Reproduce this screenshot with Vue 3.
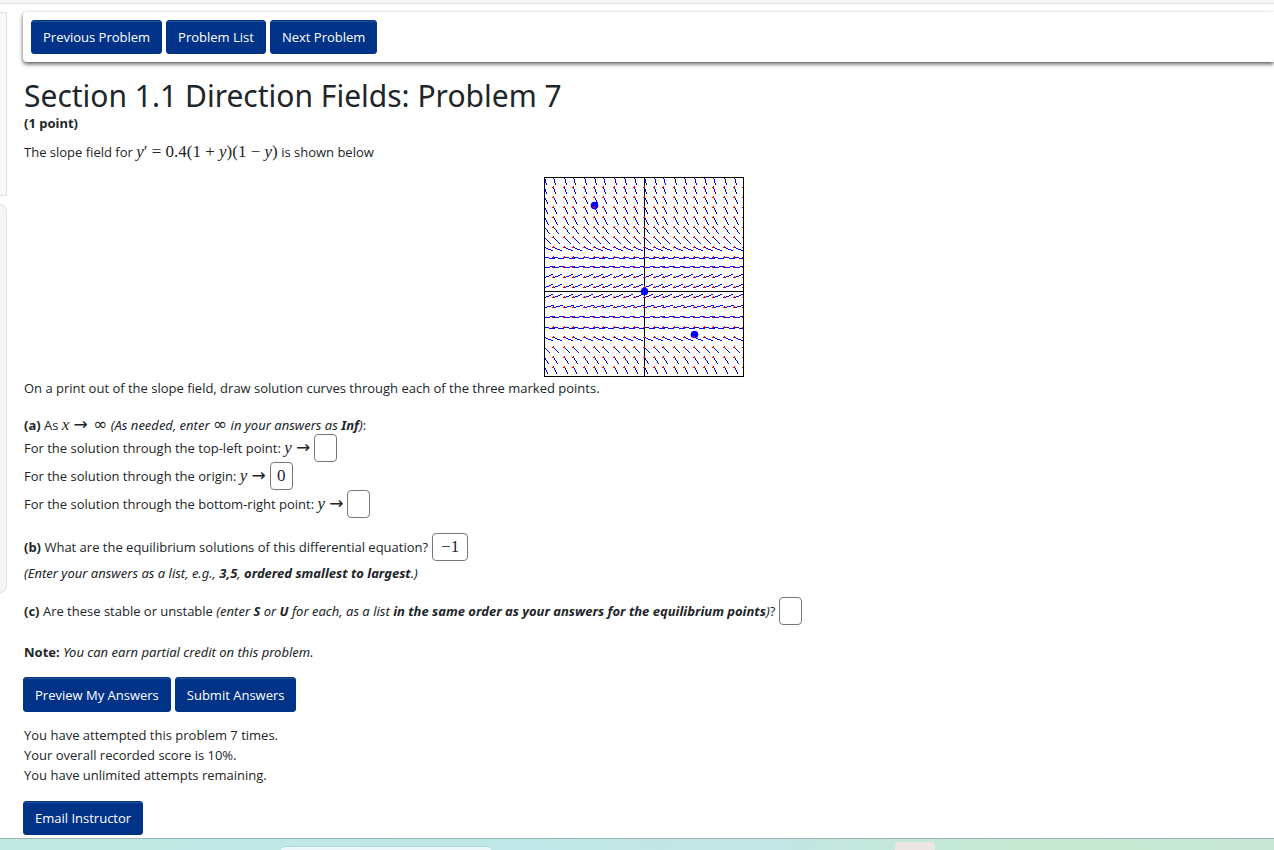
<script setup>
import { ref } from 'vue'

const topLeft = ref('')
const origin = ref('0')
const bottomRight = ref('')
const equilibria = ref('−1')
const stability = ref('')

const columns = [0, 9, 20, 29, 40, 50, 59, 70, 80, 90, 100, 110, 119, 130, 140, 150, 160, 169, 180, 190]
const rows = [
  [0, 2, 7], [10, 2, 6], [20, 3, 6], [30, 3, 6], [40, 4, 7],
  [50, 5, 6], [60, 6, 6], [70, 8, 3], [80, 10, 1], [90, 10, -1],
  [100, 8, -3], [110, 8, -3], [120, 8, -3], [130, 9, -2], [140, 10, -1],
  [150, 10, 1], [160, 8, 3], [170, 5, 5], [180, 4, 6], [190, 3, 6],
]

// Each slope segment is plotted as a one-pixel stepped line.
function plot(x, y, dx, dy) {
  const steps = Math.max(Math.abs(dx), Math.abs(dy))
  let d = ''
  for (let i = 0; i <= steps; i++) {
    const px = x + Math.round((dx * i) / steps)
    const py = y + Math.round((dy * i) / steps)
    d += `M${px} ${py}h1v1h-1z`
  }
  return d
}
const segments = rows
  .map(([y, dx, dy]) => columns.map((x) => plot(x, y, dx, dy)).join(''))
  .join('')
const marks = rows
  .map(([y]) => [...columns, 199].map((x) => `M${x - 1} ${y}h1v-1h1v2h-2z`).join(''))
  .join('')
const points = [[50, 28], [100, 114], [150, 157]]
</script>

<template>
  <div class="page">
    <div class="topline"></div>
    <div class="body">
      <aside class="side">
        <div class="panel upper"></div>
        <div class="panel lower"></div>
      </aside>
      <main class="content">
        <nav class="nav">
          <button class="btn">Previous Problem</button>
          <button class="btn">Problem List</button>
          <button class="btn">Next Problem</button>
        </nav>
        <h1>Section 1.1 Direction Fields: Problem 7</h1>
        <div class="problem">
          <p><b>(1 point)</b></p>
          <p class="intro">The slope field for <span class="math"><i>y</i>′ = 0.4(1 + <i>y</i>)(1 − <i>y</i>)</span> is shown below</p>
          <svg class="field" viewBox="0 0 200 200" width="200" height="200" role="img" aria-label="Slope field">
            <rect width="200" height="200" fill="#fff" />
            <path :d="segments" fill="#00f" shape-rendering="crispEdges" />
            <path d="M100.5 0v200M0 114.5h200" stroke="#000" fill="none" />
            <circle v-for="p in points" :key="p[0]" :cx="p[0] + 0.5" :cy="p[1] + 0.5" r="3.8" fill="#00f" />
            <path :d="marks" fill="#f00" shape-rendering="crispEdges" />
            <rect x="0.5" y="0.5" width="199" height="199" fill="none" stroke="#000" />
          </svg>
          <p>On a print out of the slope field, draw solution curves through each of the three marked points.</p>
          <p class="part-a"><b>(a)</b> As <span class="math"><i>x</i> <span class="sym">→ ∞</span></span> <em>(As needed, enter <span class="math sym">∞</span> in your answers as <b>Inf</b>)</em>:</p>
          <div class="row first">
            <label for="a1">For the solution through the top-left point: <span class="math"><i>y</i> <span class="sym">→</span></span></label>
            <input id="a1" v-model="topLeft" class="box" />
          </div>
          <div class="row">
            <label for="a2">For the solution through the origin: <span class="math"><i>y</i> <span class="sym">→</span></span></label>
            <input id="a2" v-model="origin" class="box" />
          </div>
          <div class="row">
            <label for="a3">For the solution through the bottom-right point: <span class="math"><i>y</i> <span class="sym">→</span></span></label>
            <input id="a3" v-model="bottomRight" class="box" />
          </div>
          <div class="row part">
            <label for="b"><b>(b)</b> What are the equilibrium solutions of this differential equation?</label>
            <input id="b" v-model="equilibria" class="box wide" />
          </div>
          <p class="hint"><em>(Enter your answers as a list, e.g., <b>3,5</b>, <b>ordered smallest to largest</b>.)</em></p>
          <div class="row part-c">
            <label for="c"><b>(c)</b> Are these stable or unstable <em>(enter <b>S</b> or <b>U</b> for each, as a list <b>in the same order as your answers for the equilibrium points</b>)</em>?</label>
            <input id="c" v-model="stability" class="box" />
          </div>
          <p class="note"><b>Note:</b> <em>You can earn partial credit on this problem.</em></p>
        </div>
        <div class="actions">
          <button class="btn">Preview My Answers</button>
          <button class="btn">Submit Answers</button>
        </div>
        <p>You have attempted this problem 7 times.</p>
        <p>Your overall recorded score is 10%.</p>
        <p>You have unlimited attempts remaining.</p>
        <div class="email"><button class="btn">Email Instructor</button></div>
      </main>
    </div>
    <footer class="taskbar">
      <div class="search"></div>
      <div class="app"></div>
    </footer>
  </div>
</template>

<style>
body {
  background: #fff;
  overflow: hidden;
}
</style>

<style scoped>
.page {
  display: flex;
  flex-direction: column;
  min-height: 100vh;
  color: #212529;
  font-family: "Open Sans", "Noto Sans", sans-serif;
  font-size: 13px;
  line-height: 20px;
}
b,
em {
  font-family: "Noto Sans", "Open Sans", sans-serif;
}
.topline {
  height: 3px;
  background: #f4f4f4;
  border-bottom: 1px solid #e2e2e2;
}
.body {
  flex: 1;
  display: grid;
  grid-template-columns: 7px 1fr;
  column-gap: 16px;
}
.side {
  padding-top: 8px;
}
.panel {
  box-sizing: border-box;
  border: 1px solid #e0e2e4;
  border-left: 0;
}
.upper {
  height: 184px;
  background: #f8f9fa;
}
.lower {
  height: 389px;
  margin-top: 8px;
  background: #f5f5f5;
  border-radius: 0 7px 7px 0;
}
.content {
  min-width: 0;
  padding-top: 8px;
}
.nav {
  display: flex;
  gap: 4px;
  padding: 8px;
  border-radius: 4px 0 0 4px;
  box-shadow: 0 2px 4px #555;
}
.btn {
  height: 34px;
  padding: 0 11px;
  border: 1px solid #003388;
  border-radius: 3px;
  background: #003388;
  box-shadow: inset 0 1px 0 #264f96;
  color: #fff;
  font: inherit;
}
h1 {
  margin: 17px 0 0;
  padding-left: 1px;
  font-size: 30px;
  line-height: 34px;
  font-weight: 400;
  font-family: "Noto Sans", "Open Sans", sans-serif;
}
p {
  margin: 0;
  padding-left: 1px;
}
.problem {
  margin-right: 10px;
}
.intro {
  margin-top: 9px;
}
.math {
  font-family: "Liberation Serif", serif;
  font-size: 17px;
  line-height: 16px;
  font-style: normal;
}
.sym {
  font-family: "DejaVu Sans", sans-serif;
}
.field {
  display: block;
  margin: 15px auto 1px;
}
.part-a {
  margin-top: 17px;
}
.row {
  display: flex;
  align-items: center;
  gap: 4px;
  padding-left: 1px;
}
.first {
  margin-top: -1px;
}
.box {
  box-sizing: border-box;
  width: 23px;
  height: 28px;
  padding: 0;
  border: 1px solid #777;
  border-radius: 4px;
  background: #fff;
  color: #212529;
  font-family: "Liberation Serif", serif;
  font-size: 17px;
  text-align: center;
}
.wide {
  width: 36px;
}
.part {
  margin-top: 15px;
}
.hint {
  margin-top: 2px;
}
.part-c {
  margin-top: 14px;
}
.note {
  margin-top: 17px;
}
.actions {
  display: flex;
  gap: 4px;
  margin: 15px 0 13px;
}
.actions .btn {
  height: 35px;
}
.email {
  padding: 16px 0 3px;
}
.taskbar {
  display: grid;
  grid-template-columns: 210px 40px;
  justify-content: start;
  column-gap: 404px;
  align-items: end;
  height: 11px;
  padding-left: 281px;
  border-top: 1px solid #9dbab7;
  background: linear-gradient(90deg, #c0e9e2, #c0e7e8 40%, #c3e5e5 60%, #c5ead2 80%, #c8e8d6);
}
.search {
  height: 3px;
  border-top: 1px solid #add9d9;
  border-radius: 12px 12px 0 0;
  background: #eef8fa;
}
.app {
  height: 8px;
  border-radius: 4px 4px 0 0;
  background: #ebe5e4;
}
</style>
